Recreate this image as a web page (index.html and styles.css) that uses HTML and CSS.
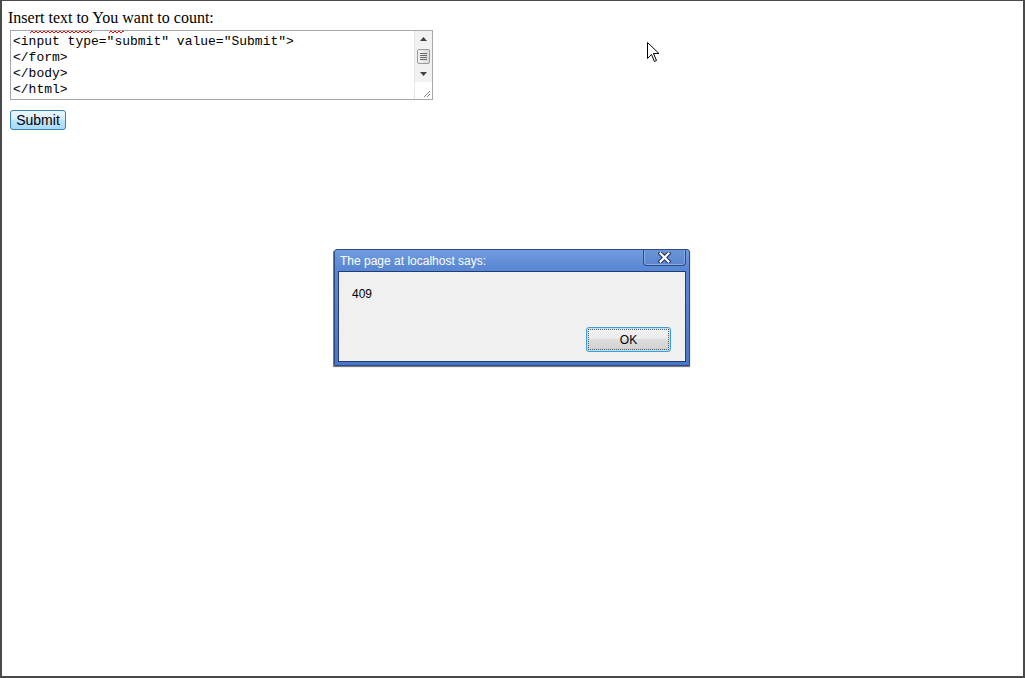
FILE: index.html
```html
<!DOCTYPE html>
<html>
<head>
<meta charset="utf-8">
<title>Count</title>
<link rel="stylesheet" href="styles.css">
</head>
<body>
<div class="frame">
  <div class="page">
    <div class="label">Insert text to You want to count:</div>
    <div class="textarea">
      <div class="text">
        <div class="squiggles">
          <svg class="sq1" width="62" height="3" viewBox="0 0 62 3"><polyline points="0,2 1,1 2,0 3,1 4,2 5,1 6,0 7,1 8,2 9,1 10,0 11,1 12,2 13,1 14,0 15,1 16,2 17,1 18,0 19,1 20,2 21,1 22,0 23,1 24,2 25,1 26,0 27,1 28,2 29,1 30,0 31,1 32,2 33,1 34,0 35,1 36,2 37,1 38,0 39,1 40,2 41,1 42,0 43,1 44,2 45,1 46,0 47,1 48,2 49,1 50,0 51,1 52,2 53,1 54,0 55,1 56,2 57,1 58,0 59,1 60,2 61,1 62,0" fill="none" stroke="#ff0000" stroke-width="1"/></svg>
          <svg class="sq2" width="15" height="3" viewBox="0 0 15 3"><polyline points="0,2 1,1 2,0 3,1 4,2 5,1 6,0 7,1 8,2 9,1 10,0 11,1 12,2 13,1 14,0 15,1" fill="none" stroke="#ff0000" stroke-width="1"/></svg>
        </div>
        <div class="line">&lt;input type="submit" value="Submit"&gt;</div>
        <div class="line">&lt;/form&gt;</div>
        <div class="line">&lt;/body&gt;</div>
        <div class="line">&lt;/html&gt;</div>
      </div>
      <div class="scrollbar">
        <div class="sb-btn">
          <svg width="7" height="4" viewBox="0 0 7 4"><path d="M3.5 0 L7 4 L0 4 Z" fill="#404040"/></svg>
        </div>
        <div class="sb-track">
          <div class="sb-thumb">
            <span></span><span></span><span></span><span></span>
          </div>
        </div>
        <div class="sb-btn">
          <svg width="7" height="4" viewBox="0 0 7 4"><path d="M0 0 L7 0 L3.5 4 Z" fill="#404040"/></svg>
        </div>
        <div class="sb-corner">
          <svg width="8" height="8" viewBox="0 0 8 8"><path d="M7 1 L1 7 M7 4 L4 7" stroke="#8a8a8a" stroke-width="1"/></svg>
        </div>
      </div>
    </div>
    <button class="submit">Submit</button>
  </div>

  <div class="dialog">
    <div class="titlebar">
      <span class="title">The page at localhost says:</span>
      <div class="close">
        <svg width="13" height="11" viewBox="0 0 13 11"><path d="M2.5 1.5 L10.5 9.5 M10.5 1.5 L2.5 9.5" stroke="#1f2f57" stroke-width="4.2" stroke-linecap="square"/><path d="M2.5 1.5 L10.5 9.5 M10.5 1.5 L2.5 9.5" stroke="#ffffff" stroke-width="2.2" stroke-linecap="square"/></svg>
      </div>
    </div>
    <div class="dialog-body">
      <div class="message">409</div>
      <div class="actions">
        <button class="ok"><span class="focus">OK</span></button>
      </div>
    </div>
  </div>

  <svg class="cursor" width="13" height="21" viewBox="0 0 13 21">
    <path d="M0.5 0.5 L0.5 16.5 L4.5 12.5 L7.5 19.5 L9.5 18.5 L6.5 11.5 L12 11.5 Z" fill="#ffffff" stroke="#000000" stroke-width="1" stroke-linejoin="miter"/>
  </svg>
</div>
</body>
</html>
```

FILE: styles.css
```css
html, body {
  margin: 0;
  padding: 0;
  background: #ffffff;
}

.frame {
  position: relative;
  box-sizing: border-box;
  width: 1025px;
  height: 678px;
  border-top: 1px solid #4a4a4a;
  border-left: 2px solid #4a4a4a;
  border-right: 2px solid #4a4a4a;
  border-bottom: 2px solid #4a4a4a;
  overflow: hidden;
}

.page {
  display: flex;
  flex-direction: column;
  align-items: flex-start;
  padding: 8px 0 0 6px;
}

.label {
  font-family: "Liberation Serif", "Times New Roman", serif;
  font-size: 16px;
  line-height: 18px;
  color: #000;
}

.textarea {
  margin-top: 3px;
  margin-left: 2px;
  width: 423px;
  height: 70px;
  box-sizing: border-box;
  border: 1px solid #a5a9ae;
  display: flex;
  background: #fff;
}

.text {
  flex: 1;
  overflow: hidden;
  padding-left: 2px;
}

.squiggles {
  height: 3px;
  display: flex;
  align-items: flex-start;
}

.squiggles svg {
  display: block;
}

.sq1 {
  margin-left: 17px;
}

.sq2 {
  margin-left: 17px;
}

.line {
  font-family: "Liberation Mono", "Courier New", monospace;
  font-size: 13px;
  line-height: 16px;
  height: 16px;
  white-space: pre;
  color: #000;
}

.scrollbar {
  width: 17px;
  display: flex;
  flex-direction: column;
  background: #f1f1f1;
  border-left: 1px solid #e6e6e6;
}

.sb-btn {
  height: 16px;
  display: flex;
  align-items: center;
  justify-content: center;
}

.sb-track {
  height: 19px;
  display: flex;
  align-items: center;
  justify-content: center;
}

.sb-thumb {
  width: 13px;
  height: 15px;
  box-sizing: border-box;
  border: 1px solid #9a9a9a;
  border-radius: 2px;
  background: linear-gradient(to right, #f4f4f4, #dcdcdc);
  display: flex;
  flex-direction: column;
  align-items: center;
  justify-content: center;
  gap: 1px;
}

.sb-thumb span {
  display: block;
  width: 7px;
  height: 1px;
  background: #6a6a6a;
}

.sb-corner {
  flex: 1;
  background: #ffffff;
  display: flex;
  align-items: flex-end;
  justify-content: flex-end;
  padding: 0 1px 1px 0;
}

.submit {
  margin: 10px 0 0 2px;
  width: 56px;
  height: 20px;
  padding: 0;
  border: 1px solid #3c7fb1;
  border-radius: 3px;
  background: linear-gradient(to bottom, #eaf6fd 0%, #d9f0fc 45%, #bee6fd 50%, #a7d9f5 100%);
  font-family: "Liberation Sans", Arial, sans-serif;
  font-size: 14px;
  color: #000;
}

/* Alert dialog overlay */
.dialog {
  position: absolute;
  left: 332px;
  top: 248px;
  width: 356px;
  height: 117px;
  box-sizing: border-box;
  border: 1px solid #2c4a86;
  border-radius: 3px 3px 0 0;
  background: linear-gradient(to bottom, #739ddf 0%, #5a88d3 15%, #4977c7 100%);
  box-shadow: -1px 1px 0 #7a7a7a, 0 1px 1px #555;
  display: flex;
  flex-direction: column;
  padding: 0 3px 3px 3px;
}

.titlebar {
  height: 21px;
  display: flex;
  align-items: flex-start;
  justify-content: space-between;
}

.title {
  font-family: "Liberation Sans", Arial, sans-serif;
  font-size: 12px;
  color: #ffffff;
  padding: 4px 0 0 2px;
  line-height: 14px;
}

.close {
  width: 43px;
  height: 16px;
  box-sizing: border-box;
  border: 1px solid #2c4a86;
  border-top: none;
  border-radius: 0 0 4px 4px;
  background: linear-gradient(to bottom, #6c95d8, #5a86d0);
  box-shadow: inset 0 -1px 0 #88a9e2, inset 1px 0 0 #88a9e2, inset -1px 0 0 #88a9e2;
  display: flex;
  align-items: center;
  justify-content: center;
}

.dialog-body {
  flex: 1;
  background: #f0f0f0;
  border: 1px solid #1e3c78;
  display: flex;
  flex-direction: column;
  justify-content: space-between;
  padding: 14px 14px 9px 13px;
}

.message {
  font-family: "Liberation Sans", Arial, sans-serif;
  font-size: 12px;
  line-height: 16px;
  color: #000;
}

.actions {
  display: flex;
  justify-content: flex-end;
}

.ok {
  width: 85px;
  height: 25px;
  padding: 1px;
  border: 1px solid #3c9fd9;
  border-radius: 3px;
  background: linear-gradient(to bottom, #f2f2f2 0%, #ebebeb 45%, #dddddd 50%, #cfcfcf 100%);
  box-shadow: inset 0 0 0 1px #b9e4f8;
  font-family: "Liberation Sans", Arial, sans-serif;
  font-size: 12px;
  color: #000;
}

.focus {
  display: flex;
  align-items: center;
  justify-content: center;
  height: 100%;
  box-sizing: border-box;
  border: 1px dotted #555;
}

.cursor {
  position: absolute;
  left: 645px;
  top: 41px;
}
```
